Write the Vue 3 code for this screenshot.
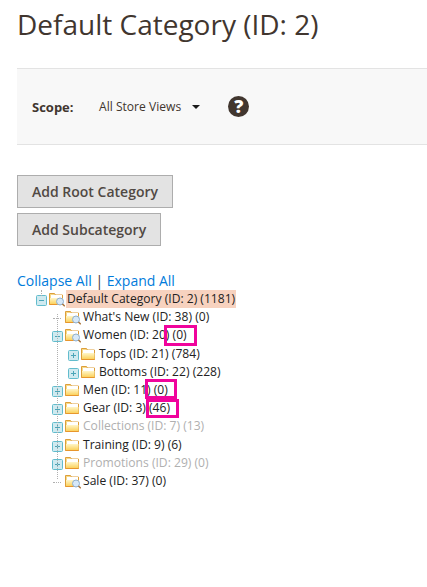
<script setup>
const rows = [
  { label: "Default Category (ID: 2) (1181)", depth: 0, toggle: "minus", icon: "search", selected: true },
  { label: "What's New (ID: 38) (0)", depth: 1, toggle: "", icon: "search" },
  { label: "Women (ID: 20) (0)", depth: 1, toggle: "minus", icon: "search" },
  { label: "Tops (ID: 21) (784)", depth: 2, toggle: "plus", icon: "folder" },
  { label: "Bottoms (ID: 22) (228)", depth: 2, toggle: "plus", icon: "folder" },
  { label: "Men (ID: 11) (0)", depth: 1, toggle: "plus", icon: "folder" },
  { label: "Gear (ID: 3) (46)", depth: 1, toggle: "plus", icon: "folder" },
  { label: "Collections (ID: 7) (13)", depth: 1, toggle: "plus", icon: "folder", muted: true },
  { label: "Training (ID: 9) (6)", depth: 1, toggle: "plus", icon: "folder" },
  { label: "Promotions (ID: 29) (0)", depth: 1, toggle: "plus", icon: "folder", muted: true },
  { label: "Sale (ID: 37) (0)", depth: 1, toggle: "", icon: "search" },
];
const marks = [
  { left: 164, top: 325, width: 33, height: 21 },
  { left: 145, top: 379, width: 32, height: 20 },
  { left: 146, top: 399, width: 33, height: 19 },
];
const indent = (r) => ({ paddingLeft: 36 + r.depth * 16 + "px" });
const box = (m) => ({ left: m.left + "px", top: m.top + "px", width: m.width + "px", height: m.height + "px" });
</script>

<template>
  <div class="page">
    <h1 class="title">Default Category (ID: 2)</h1>
    <div class="scope">
      <span class="scope-label">Scope:</span>
      <span class="scope-value">All Store Views</span>
      <span class="caret"></span>
      <span class="help">?</span>
    </div>
    <div class="actions">
      <button class="btn">Add Root Category</button>
      <button class="btn">Add Subcategory</button>
    </div>
    <div class="links"><a>Collapse All</a> <span class="sep">|</span> <a>Expand All</a></div>
    <div class="tree">
      <div v-for="r in rows" :key="r.label" class="row" :class="{ muted: r.muted }" :style="indent(r)">
        <span class="toggle">
          <svg v-if="r.toggle" width="11" height="11" viewBox="0 0 11 11">
            <rect x="0.5" y="0.5" width="10" height="10" rx="1" fill="#cfeaf0" stroke="#62bccd" />
            <path d="M3 5.500h5" stroke="#4aa5b8" stroke-width="1" />
            <path v-if="r.toggle === 'plus'" d="M5.500 3v5" stroke="#4aa5b8" stroke-width="1" />
          </svg>
          <span v-else class="stub"></span>
        </span>
        <svg class="folder" width="17" height="16" viewBox="0 0 17 16">
          <defs>
            <linearGradient id="fg" x1="0" y1="0" x2="0" y2="1">
              <stop offset="0" stop-color="#fff6c8" />
              <stop offset="1" stop-color="#fbd25e" />
            </linearGradient>
          </defs>
          <path d="M1.500 13.500v-11h5l1 1.500h7v9.500z" fill="#f6d98a" stroke="#dd9f3a" />
          <rect x="3" y="4" width="11" height="3" fill="#fff" />
          <rect x="2" y="7" width="12.500" height="6" fill="url(#fg)" />
          <path d="M1.500 13.500h13" stroke="#e8962c" />
          <g v-if="r.icon === 'search'">
            <circle cx="12" cy="10.500" r="3.500" fill="#d6e8f8" stroke="#8fb0cf" />
            <path d="M14.500 13l2.300 2.300" stroke="#a9743a" stroke-width="1.500" />
          </g>
        </svg>
        <span class="label" :class="{ selected: r.selected }">{{ r.label }}</span>
      </div>
      <span class="vline v1"></span>
      <span class="vline v2"></span>
    </div>
    <span v-for="(m, i) in marks" :key="i" class="mark" :style="box(m)"></span>
  </div>
</template>

<style>
html, body { margin: 0; background: #fff; }
</style>

<style scoped>
.page {
  position: relative;
  width: 427px;
  height: 587px;
  overflow: hidden;
  box-sizing: border-box;
  padding: 0 0 0 17px;
  font-family: "Open Sans", sans-serif;
  color: #303030;
  background: #fff;
}
.title {
  margin: 0;
  padding-top: 5px;
  height: 68px;
  box-sizing: border-box;
  font-size: 28px;
  line-height: 38px;
  font-weight: 400;
  color: #41362f;
}
.scope {
  display: flex;
  align-items: center;
  height: 77px;
  box-sizing: border-box;
  padding-left: 15px;
  background: #f8f8f8;
  border-top: 1px solid #e3e3e3;
  border-bottom: 1px solid #e3e3e3;
  font-size: 13px;
}
.scope-label { font-weight: 700; width: 67px; color: #41362f; }
.scope-value { color: #41362f; font-size: 12.1px; }
.caret {
  margin-left: 11px;
  border-left: 4px solid transparent;
  border-right: 4px solid transparent;
  border-top: 4px solid #1a1a1a;
}
.help {
  margin-left: 28px;
  width: 21px;
  height: 21px;
  border-radius: 50%;
  background: #41362f;
  color: #fff;
  font-weight: 800;
  font-size: 18px;
  line-height: 21px;
  text-align: center;
}
.actions {
  display: flex;
  flex-direction: column;
  align-items: flex-start;
  gap: 5px;
  margin-top: 30px;
}
.btn {
  height: 33px;
  padding: 0 14px;
  border: 1px solid #adadad;
  border-radius: 0;
  background: #e3e3e3;
  color: #514943;
  font-family: inherit;
  font-size: 14px;
  font-weight: 600;
}
.links {
  margin-top: 25px;
  font-size: 14px;
  line-height: 19px;
  color: #41362f;
}
.links a { color: #007bdb; }
.sep { color: #41362f; }
.tree {
  position: relative;
  margin-left: -17px;
}
.row {
  display: flex;
  align-items: center;
  height: 18.2px;
  font-size: 12.1px;
  color: #222;
  white-space: nowrap;
}
.row.muted { color: #b0b0b0; }
.toggle {
  display: flex;
  align-items: center;
  justify-content: center;
  width: 11px;
  margin-right: 1px;
  height: 11px;
  margin-top: 3px;
}
.stub {
  display: block;
  width: 8px;
  margin-left: -2px;
  border-top: 1px dotted #b0b0b0;
}
.folder { margin-right: 1px; flex: none; }
.label { padding: 0 1px; line-height: 18px; }
.selected { background: #f7d2bf; }
.vline {
  position: absolute;
  width: 0;
  border-left: 1px dotted #b0b0b0;
}
.v1 { left: 41px; top: 0; height: 6px; }
.v2 { left: 57px; top: 24px; height: 165px; }
.mark {
  position: absolute;
  box-sizing: border-box;
  border: 3px solid #f0049c;
}
</style>
